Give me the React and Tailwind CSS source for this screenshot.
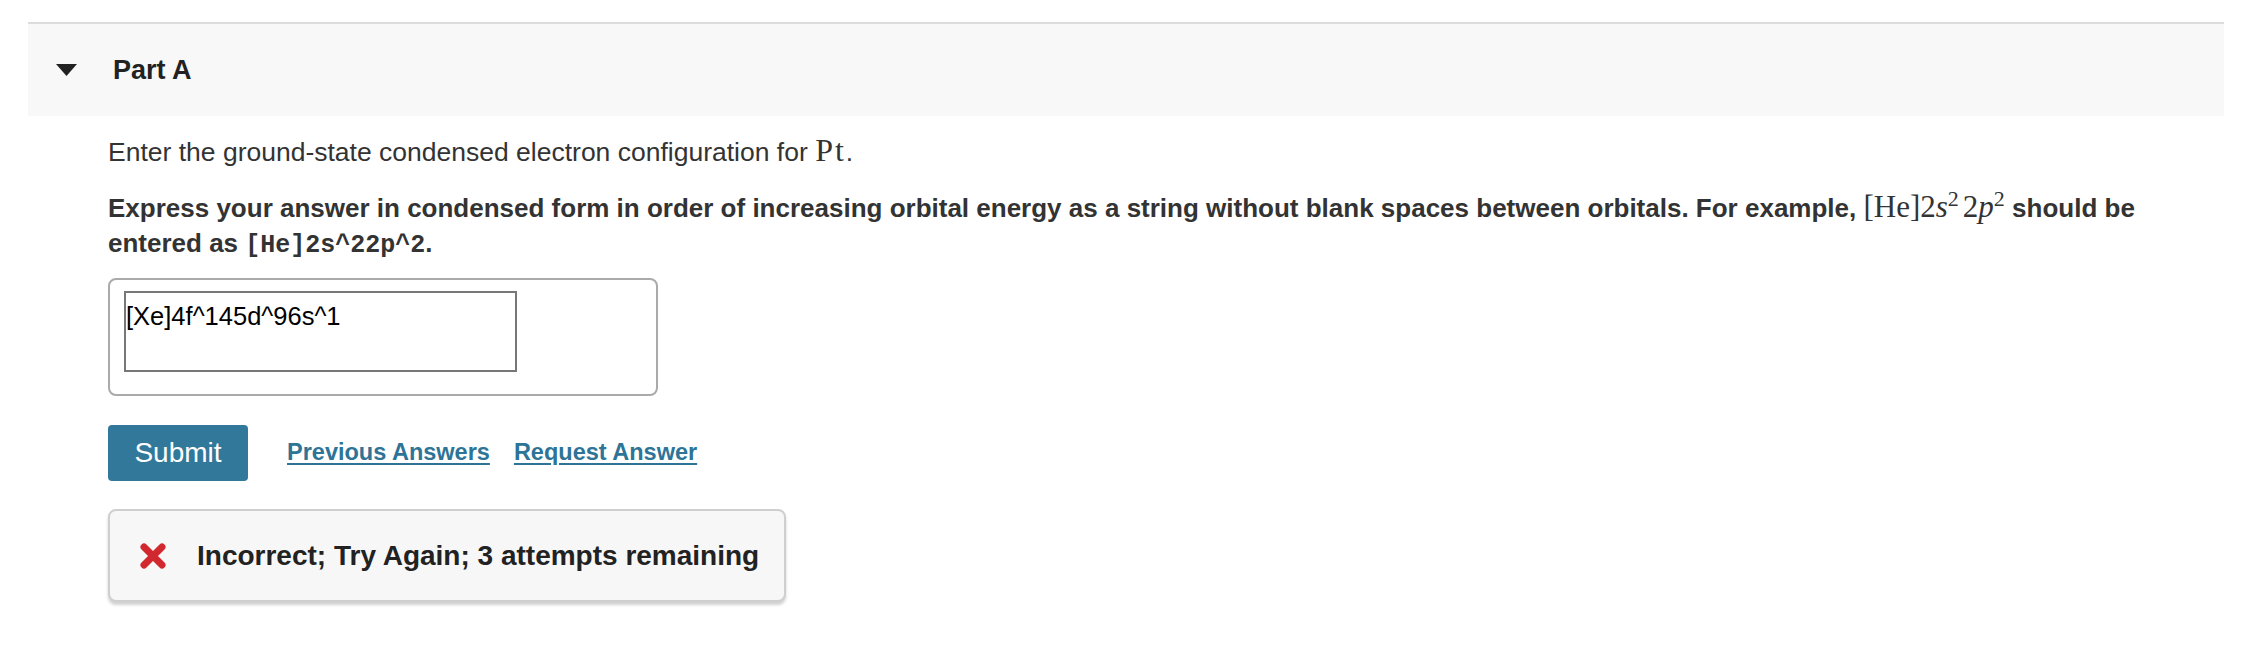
function XMark() {
    return (
        <svg width="28" height="26" viewBox="0 0 28 26" className="shrink-0">
            <path d="M5 4 L23 22 M23 4 L5 22" stroke="#d0282e" strokeWidth="7" strokeLinecap="round" />
        </svg>
    )
}

function App() {
    const sans = { fontFamily: '"Liberation Sans", Arial, sans-serif' }
    const serif = { fontFamily: '"Liberation Serif", serif' }
    return (
        <div className="bg-white min-h-[656px] pt-[22px] px-[28px] text-[#333]" style={sans}>
            <div className="border-t-2 border-[#dcdcdc] bg-[#f8f8f8] h-[94px] flex items-center pl-[28px]">
                <svg width="21" height="12" viewBox="0 0 21 12">
                    <path d="M0 0 L21 0 L10.5 12 Z" fill="#222" />
                </svg>
                <div className="ml-[36px] text-[27px] font-bold text-[#222]">Part A</div>
            </div>

            <div className="pl-[80px] pr-[28px]">
                <p className="mt-[16px] text-[26.5px] leading-[36px]">
                    Enter the ground-state condensed electron configuration for{' '}
                    <span className="text-[32px] tracking-[2px]" style={serif}>Pt</span>.
                </p>

                <p className="mt-[19px] text-[26px] leading-[35px] font-bold">
                    Express your answer in condensed form in order of increasing orbital energy as a string without blank spaces between orbitals. For example,{' '}
                    <span className="font-normal text-[31px]" style={serif}>
                        [He]2<i>s</i><sup className="text-[22px] -top-[0.5em] mr-[4px]">2</sup>2<i>p</i><sup className="text-[22px] -top-[0.5em]">2</sup>
                    </span>{' '}
                    should be entered as{' '}
                    <code className="font-bold text-[25px]" style={{ fontFamily: '"Liberation Mono", monospace' }}>[He]2s^22p^2</code>.
                </p>

                <div className="mt-[15px] w-[550px] h-[118px] border-2 border-[#aaa] rounded-[8px] pt-[11px] pl-[14px]">
                    <div className="w-[393px] h-[81px] border-2 border-[#777] pt-[9px] text-[25.5px] leading-[29px] text-black">
                        [Xe]4f^145d^96s^1
                    </div>
                </div>

                <div className="mt-[29px] flex items-center">
                    <button className="w-[140px] h-[56px] rounded-[4px] bg-[#32789a] text-white text-[28px]">Submit</button>
                    <a className="ml-[39px] text-[23.5px] font-bold text-[#2d7497] underline underline-offset-[3px]">Previous Answers</a>
                    <a className="ml-[24px] text-[23.5px] font-bold text-[#2d7497] underline underline-offset-[3px]">Request Answer</a>
                </div>

                <div className="mt-[28px] w-[678px] h-[93px] border-2 border-[#cfcfcf] rounded-[8px] bg-[#f7f7f7] shadow-[0_3px_3px_rgba(0,0,0,0.18)] flex items-center pl-[29px]">
                    <XMark />
                    <span className="ml-[30px] text-[28px] font-bold text-[#222]">Incorrect; Try Again; 3 attempts remaining</span>
                </div>
            </div>
        </div>
    )
}

export default App
